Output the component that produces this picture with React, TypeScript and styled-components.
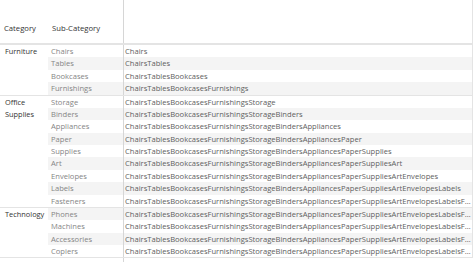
import React from 'react';
import styled, { createGlobalStyle } from 'styled-components';

const GlobalStyle = createGlobalStyle`
  html, body {
    margin: 0;
    padding: 0;
    background: #ffffff;
  }
  body {
    font-family: 'Open Sans', 'Liberation Sans', sans-serif;
  }
`;

const COLORS = {
  band: '#f4f4f4',
  rule: '#e4e4e4',
  axis: '#d6d6d6',
  dark: '#333333',
  sub: '#858585',
  value: '#5e5e5e',
};

const ROW_H = 12.38;

interface IGroup {
  category: string;
  items: string[];
}

const GROUPS: IGroup[] = [
  { category: 'Furniture', items: ['Chairs', 'Tables', 'Bookcases', 'Furnishings'] },
  {
    category: 'Office Supplies',
    items: ['Storage', 'Binders', 'Appliances', 'Paper', 'Supplies', 'Art', 'Envelopes', 'Labels', 'Fasteners'],
  },
  { category: 'Technology', items: ['Phones', 'Machines', 'Accessories', 'Copiers'] },
];

const Table = styled.div`
  width: 474px;
  height: 262px;
  overflow: hidden;
  font-size: 7.6px;
  display: flex;
  flex-direction: column;
`;

const HeaderRow = styled.div`
  display: grid;
  grid-template-columns: 48px 75px 1fr;
  height: 43px;
  border-bottom: 2px solid ${COLORS.rule};
  margin-right: 1px;
  border-right: 1px solid ${COLORS.rule};
`;

const HeadCell = styled.div<{ $blank?: boolean }>`
  display: flex;
  align-items: flex-end;
  padding: 0 0 10px 4px;
  color: ${COLORS.dark};
  font-size: 7.7px;
  border-left: ${(p) => (p.$blank ? `1px solid ${COLORS.axis}` : 'none')};
`;

const Group = styled.div`
  display: grid;
  grid-template-columns: 48px 1fr;
  border-bottom: 1px solid ${COLORS.rule};
  margin-right: 1px;
  border-right: 1px solid ${COLORS.rule};
`;

const CatCell = styled.div`
  padding: 0 2px 0 5px;
  color: ${COLORS.dark};
  font-size: 7.4px;
  line-height: ${ROW_H}px;
`;

const Rows = styled.div`
  display: flex;
  flex-direction: column;
`;

const Row = styled.div<{ $band: boolean }>`
  display: grid;
  grid-template-columns: 75px 1fr;
  height: ${ROW_H}px;
  line-height: ${ROW_H}px;
  background: ${(p) => (p.$band ? COLORS.band : 'transparent')};
`;

const SubCell = styled.div`
  padding-left: 3px;
  color: ${COLORS.sub};
  white-space: nowrap;
`;

const ValueCell = styled.div`
  padding: 0 1px 0 1px;
  border-left: 1px solid ${COLORS.axis};
  color: ${COLORS.value};
  white-space: nowrap;
  overflow: hidden;
  text-overflow: ellipsis;
`;

const AxisTail = styled.div`
  flex: 1;
  margin-left: 123px;
  border-left: 1px solid ${COLORS.axis};
`;

const App = () => {
  let index = 0;
  let running = '';
  return (
    <>
      <GlobalStyle />
      <Table>
        <HeaderRow>
          <HeadCell>Category</HeadCell>
          <HeadCell>Sub-Category</HeadCell>
          <HeadCell $blank />
        </HeaderRow>
        {GROUPS.map((group) => (
          <Group key={group.category}>
            <CatCell>{group.category}</CatCell>
            <Rows>
              {group.items.map((item) => {
                running += item;
                const band = index % 2 === 1;
                index += 1;
                return (
                  <Row key={item} $band={band}>
                    <SubCell>{item}</SubCell>
                    <ValueCell>{running}</ValueCell>
                  </Row>
                );
              })}
            </Rows>
          </Group>
        ))}
        <AxisTail />
      </Table>
    </>
  );
};

export default App;
